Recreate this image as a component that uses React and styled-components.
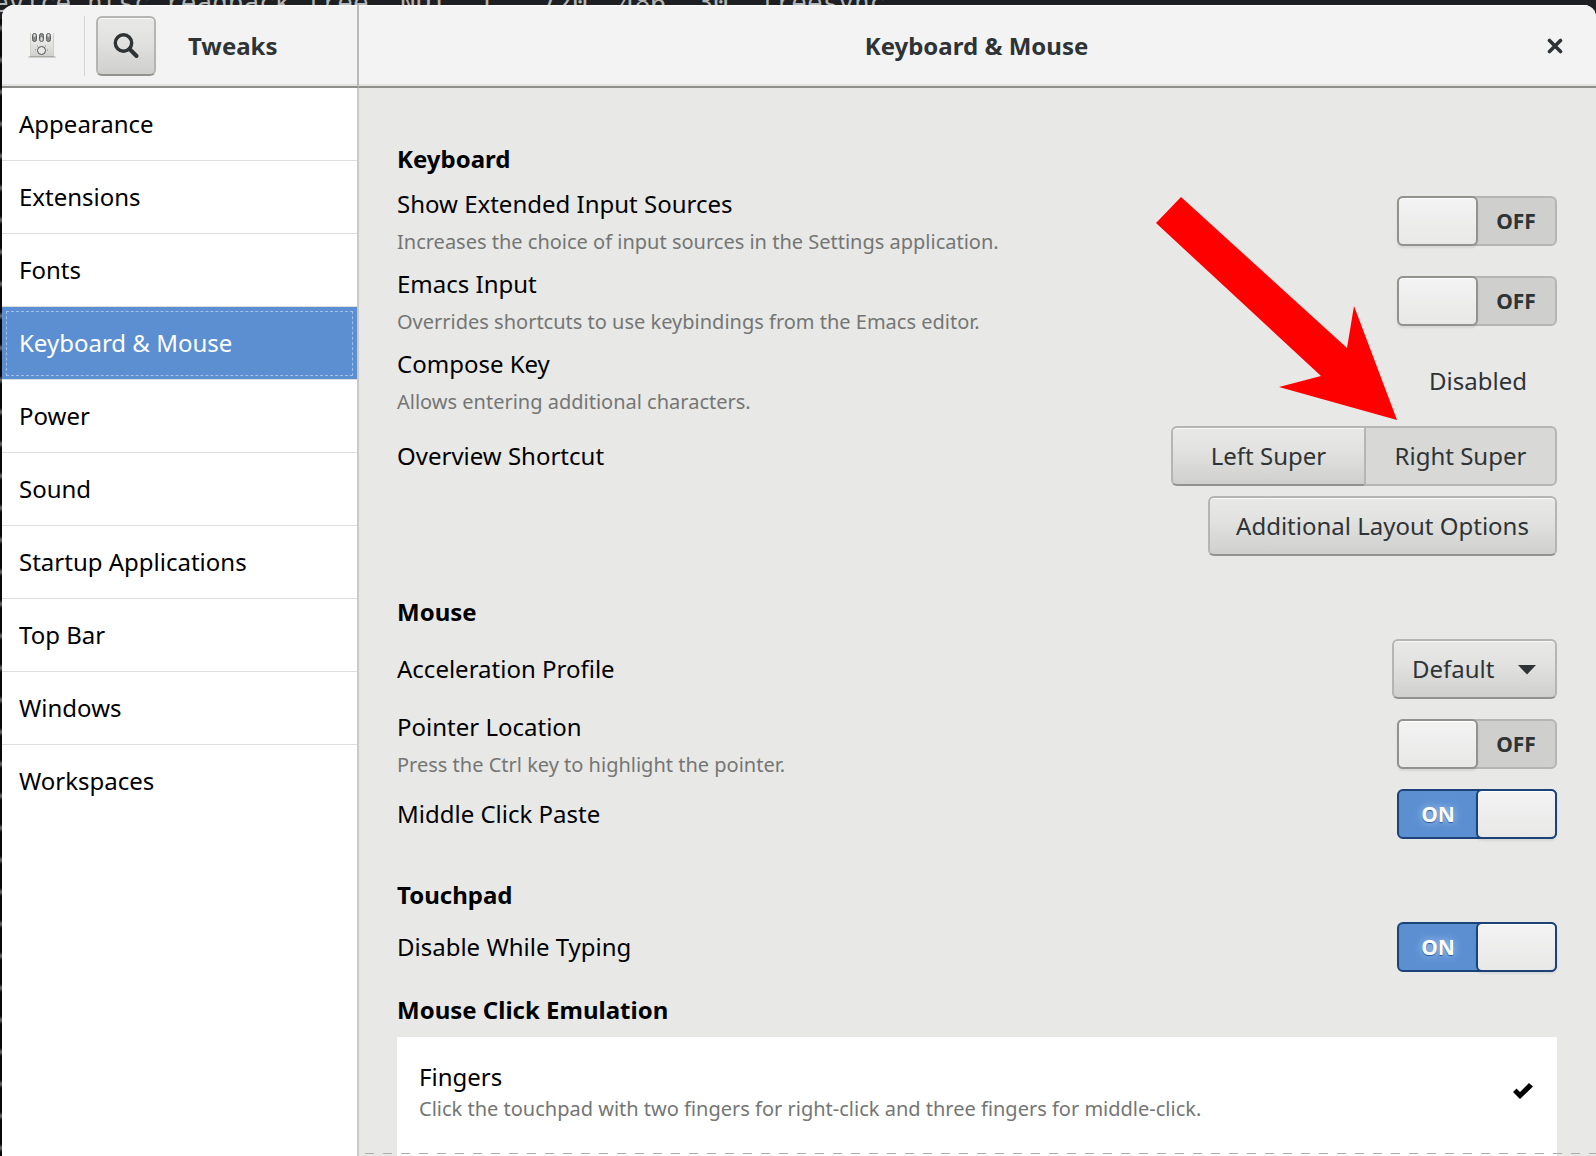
import { useState } from "react";
import styled, { createGlobalStyle, css } from "styled-components";

const GlobalStyle = createGlobalStyle`
  * {
    box-sizing: border-box;
  }
  body {
    margin: 0;
    background: #1b1c1f;
    color: #000;
    font-family: "Noto Sans", "Open Sans", sans-serif;
    font-size: 24px;
    line-height: 36px;
  }
  button, select {
    font: inherit;
  }
  h1, h2, h3, p, ul {
    margin: 0;
    padding: 0;
  }
`;

const Desktop = styled.div`
  position: relative;
  height: 100vh;
  padding: 5px 0 0 2px;
  overflow: hidden;
  background: repeating-linear-gradient(#08090a 0 24px, #6a6b6c 28px, #08090a 32px);
`;

/* last line of the terminal that sits behind the window */
const Terminal = styled.div`
  position: absolute;
  top: -13px;
  left: -7px;
  right: 0;
  height: 32px;
  overflow: hidden;
  background: #1d1f22;
  color: #b4b5b5;
  font-family: "DejaVu Sans Mono", monospace;
  font-size: 26px;
  line-height: 32px;
  white-space: pre;
`;

const Window = styled.div`
  position: relative;
  display: grid;
  grid-template-columns: 357px 1fr;
  grid-template-rows: 83px 1fr;
  height: 100%;
  border-radius: 12px 12px 0 0;
  overflow: hidden;
  background: #e8e8e7;
`;

const HeaderBar = styled.header`
  display: flex;
  align-items: center;
  background: #f3f3f3;
  border-bottom: 2px solid #8f8f8d;
  box-shadow: inset 0 -2px #e2e2e1, inset 0 1px #fff;
  color: #2e3436;
`;

const SideHeader = styled(HeaderBar)`
  padding-left: 26px;
  border-right: 2px solid #b9b9b7;
`;

const MainHeader = styled(HeaderBar)`
  display: grid;
  grid-template-columns: 60px 1fr 60px;
  padding: 0 11px 0 9px;
`;

const Title = styled.h1`
  font-size: 24px;
  font-weight: 700;
  text-align: center;
  grid-column: 2;
`;

const Separator = styled.span`
  width: 1px;
  height: 60px;
  margin: 0 11px 0 28px;
  background: #d2d2d0;
`;

const raised = css`
  border: 2px solid #b5b5b2;
  border-bottom-color: #92928f;
  border-radius: 6px;
  background: linear-gradient(#e8e8e7, #e2e2e0 40%, #cfcfcd);
  box-shadow: inset 0 1px #f8f8f8;
  color: #2e3436;
`;

const SearchButton = styled.button`
  ${raised}
  display: flex;
  align-items: center;
  justify-content: center;
  width: 60px;
  height: 60px;
  margin-right: 32px;
  padding: 0;
`;

const CloseButton = styled.button`
  display: flex;
  align-items: center;
  justify-content: center;
  height: 60px;
  border: 0;
  background: none;
  color: #2e3436;
`;

const Sidebar = styled.nav`
  background: #fff;
  border-right: 2px solid #cacac8;

  ul {
    list-style: none;
  }
`;

const SideLink = styled.a`
  display: flex;
  align-items: center;
  height: 73px;
  padding: 0 17px;
  border-bottom: 1px solid ${(p) => (p.$last ? "transparent" : "#dededd")};
  color: #000;
  text-decoration: none;

  ${(p) =>
    p.$active &&
    css`
      background: #5b8fd2;
      color: #fff;
      outline: 1px dashed #a3c1e8;
      outline-offset: -5px;
    `}
`;

const Content = styled.main`
  position: relative;
  min-height: 0;
  padding: 54px 39px 0 38px;
  overflow: hidden;

  /* undershoot hint: there is more to scroll to */
  &::after {
    content: "";
    position: absolute;
    left: 0;
    right: 0;
    bottom: 2px;
    height: 1px;
    background: repeating-linear-gradient(90deg, transparent 0 6px, #adadab 6px 15px, transparent 15px 18px);
  }
`;

const Section = styled.section`
  display: flex;
  flex-direction: column;
  gap: 10px;
  margin-bottom: ${(p) => (p.$tight ? "21px" : "39px")};
`;

const Heading = styled.h2`
  font-size: 24px;
  font-weight: 700;
  line-height: 34px;
`;

const SettingRow = styled.div`
  display: flex;
  align-items: center;
  justify-content: ${(p) => (p.$end ? "flex-end" : "space-between")};
`;

const RowText = styled.div`
  display: flex;
  flex-direction: column;
  gap: ${(p) => (p.$dense ? "0" : "6px")};
`;

const Description = styled.p`
  color: #747674;
  font-size: 20px;
  line-height: 28px;
`;

const SwitchBox = styled.label`
  position: relative;
  display: grid;
  grid-template-columns: 1fr 1fr;
  grid-template-rows: 100%;
  align-items: center;
  width: 160px;
  height: 50px;
  border: 2px solid ${(p) => (p.$on ? "#1c4377" : "#b5b5b2")};
  border-radius: 6px;
  background: ${(p) => (p.$on ? "#5b8fd2" : "#cfcfcd")};
  color: ${(p) => (p.$on ? "#fff" : "#2e3436")};
  font-size: 21px;
  font-weight: 700;
  text-align: center;
  text-shadow: ${(p) => (p.$on ? "0 1px 1px #2b5c9c, 0 0 8px #b8d2f3" : "none")};

  input {
    position: absolute;
    inset: 0;
    margin: 0;
    opacity: 0;
  }

  span {
    grid-row: 1;
    grid-column: ${(p) => (p.$on ? 1 : 2)};
  }

  &::before {
    content: "";
    grid-row: 1;
    grid-column: ${(p) => (p.$on ? 2 : 1)};
    align-self: stretch;
    margin: ${(p) => (p.$on ? "-2px -2px -2px -1px" : "-2px -1px -2px -2px")};
    border: 2px solid ${(p) => (p.$on ? "#1c4377" : "#92928f")};
    border-radius: 6px;
    background: linear-gradient(#f3f3f3, #e8e8e7);
    box-shadow: inset 0 1px #fff, 0 2px 2px rgba(0, 0, 0, 0.08);
  }
`;

const FlatButton = styled.button`
  height: 60px;
  margin: -5px 0;
  padding: 0 30px;
  border: 0;
  background: none;
  color: #2e3436;
`;

const Button = styled.button`
  ${raised}
  min-width: ${(p) => p.$minWidth};
  height: 60px;
  padding: 0 12px;

  ${(p) =>
    p.$pressed &&
    css`
      background: #d8d8d6;
      border-color: #b5b5b2;
      box-shadow: none;
    `}
`;

const Linked = styled.div`
  display: flex;

  ${Button}:first-child {
    border-right-width: 0;
    border-radius: 6px 0 0 6px;
  }
  ${Button}:last-child {
    border-radius: 0 6px 6px 0;
  }
`;

const SelectWrap = styled.div`
  position: relative;

  svg {
    position: absolute;
    right: 21px;
    top: 26px;
    pointer-events: none;
  }
`;

const Select = styled.select`
  ${raised}
  appearance: none;
  width: 165px;
  height: 60px;
  padding: 0 50px 0 18px;
`;

const Card = styled.button`
  display: flex;
  align-items: center;
  justify-content: space-between;
  width: 100%;
  padding: 22px 24px 40px 22px;
  border: 0;
  background: #fff;
  text-align: left;
`;

const Arrow = styled.svg`
  position: absolute;
  top: 108px;
  right: 198px;
  pointer-events: none;
`;

const pages = [
  "Appearance",
  "Extensions",
  "Fonts",
  "Keyboard & Mouse",
  "Power",
  "Sound",
  "Startup Applications",
  "Top Bar",
  "Windows",
  "Workspaces",
];

const TweaksIcon = () => (
  <svg width="28" height="28" viewBox="0 0 28 28" aria-hidden="true">
    <defs>
      <linearGradient id="body" x1="0" y1="0" x2="0" y2="1">
        <stop offset="0" stopColor="#f4f4f1" />
        <stop offset="1" stopColor="#d0d0cb" />
      </linearGradient>
    </defs>
    <rect x="0" y="24" width="28" height="2" rx="1" fill="#d0d0ce" />
    <rect x="2" y="1" width="24" height="24" rx="1" fill="url(#body)" />
    <path d="M2.5 1v23M25.500 1v23" stroke="#cfcfcb" />
    <path d="M2 24.5h24" stroke="#a9a9a5" />
    {[4, 11, 18].map((x) => (
      <rect key={x} x={x + 0.5} y="1.500" width="4" height="8" rx="2" fill="#8d8f8e" stroke="#5c5f60" />
    ))}
    <rect x="5.5" y="2" width="2" height="3" rx="1" fill="#ddd" />
    <rect x="12.5" y="5" width="2" height="4" rx="1" fill="#ddd" />
    <rect x="19.5" y="2" width="2" height="3" rx="1" fill="#ddd" />
    <circle cx="13.5" cy="18.5" r="4" fill="#e9e9e6" stroke="#4c4f50" />
    <path d="M7 18h1M19 18h1M9 14h1M17 14h1" stroke="#8a8a86" />
  </svg>
);

const Switch = ({ id, label, initial = false }) => {
  const [on, setOn] = useState(initial);

  return (
    <SwitchBox $on={on}>
      <input
        id={id}
        type="checkbox"
        role="switch"
        aria-label={label}
        checked={on}
        onChange={(e) => setOn(e.target.checked)}
      />
      <span>{on ? "ON" : "OFF"}</span>
    </SwitchBox>
  );
};

const Setting = ({ id, label, description, children }) => (
  <SettingRow>
    <RowText>
      <label htmlFor={id}>{label}</label>
      {description && <Description>{description}</Description>}
    </RowText>
    {children}
  </SettingRow>
);

const App = () => {
  const [page, setPage] = useState("Keyboard & Mouse");
  const [overview, setOverview] = useState("Right Super");

  return (
    <Desktop>
      <GlobalStyle />
      <Terminal aria-hidden="true">
        {"evice ntsc readback free  NDI  1   720  486  30  freesync"}
      </Terminal>
      <Window>
        <SideHeader>
          <TweaksIcon />
          <Separator />
          <SearchButton aria-label="Search">
            <svg width="28" height="28" viewBox="0 0 28 28" fill="none" stroke="currentColor" aria-hidden="true">
              <circle cx="11.5" cy="11" r="8.2" strokeWidth="3.4" />
              <path d="M17.5 17l7 7" strokeWidth="4" strokeLinecap="round" />
            </svg>
          </SearchButton>
          <Title as="span">Tweaks</Title>
        </SideHeader>
        <MainHeader>
          <Title>{page}</Title>
          <CloseButton aria-label="Close">
            <svg width="16" height="16" viewBox="0 0 16 16" stroke="currentColor" aria-hidden="true">
              <path d="M2.5 2.5l11 11M13.5 2.5l-11 11" strokeWidth="3.6" strokeLinecap="round" />
            </svg>
          </CloseButton>
        </MainHeader>

        <Sidebar>
          <ul>
            {pages.map((name, index) => (
              <li key={name}>
                <SideLink
                  href="#"
                  $active={name === page}
                  $last={index === pages.length - 1}
                  onClick={() => setPage(name)}
                >
                  {name}
                </SideLink>
              </li>
            ))}
          </ul>
        </Sidebar>

        <Content>
          <Section>
            <Heading>Keyboard</Heading>
            <Setting
              id="extended"
              label="Show Extended Input Sources"
              description="Increases the choice of input sources in the Settings application."
            >
              <Switch id="extended" label="Show Extended Input Sources" />
            </Setting>
            <Setting
              id="emacs"
              label="Emacs Input"
              description="Overrides shortcuts to use keybindings from the Emacs editor."
            >
              <Switch id="emacs" label="Emacs Input" />
            </Setting>
            <Setting id="compose" label="Compose Key" description="Allows entering additional characters.">
              <FlatButton id="compose">Disabled</FlatButton>
            </Setting>
            <SettingRow>
              <span id="overview">Overview Shortcut</span>
              <Linked role="group" aria-labelledby="overview">
                {["Left Super", "Right Super"].map((name) => (
                  <Button
                    key={name}
                    $minWidth="193px"
                    $pressed={name === overview}
                    aria-pressed={name === overview}
                    onClick={() => setOverview(name)}
                  >
                    {name}
                  </Button>
                ))}
              </Linked>
            </SettingRow>
            <SettingRow $end>
              <Button $minWidth="349px">Additional Layout Options</Button>
            </SettingRow>
          </Section>

          <Section>
            <Heading>Mouse</Heading>
            <Setting id="accel" label="Acceleration Profile">
              <SelectWrap>
                <Select id="accel" defaultValue="Default">
                  <option>Default</option>
                </Select>
                <svg width="18" height="10" viewBox="0 0 18 10" aria-hidden="true">
                  <path d="M0 0h18l-9 9.5z" fill="#2e3436" />
                </svg>
              </SelectWrap>
            </Setting>
            <Setting
              id="pointer"
              label="Pointer Location"
              description="Press the Ctrl key to highlight the pointer."
            >
              <Switch id="pointer" label="Pointer Location" />
            </Setting>
            <Setting id="paste" label="Middle Click Paste">
              <Switch id="paste" label="Middle Click Paste" initial />
            </Setting>
          </Section>

          <Section $tight>
            <Heading>Touchpad</Heading>
            <Setting id="typing" label="Disable While Typing">
              <Switch id="typing" label="Disable While Typing" initial />
            </Setting>
          </Section>

          <Section>
            <Heading as="h3">Mouse Click Emulation</Heading>
            <Card>
              <RowText $dense>
                <span>Fingers</span>
                <Description as="span">
                  Click the touchpad with two fingers for right-click and three fingers for middle-click.
                </Description>
              </RowText>
              <svg width="20" height="16" viewBox="0 0 20 16" aria-hidden="true">
                <path d="M0 9l3.5-3.5L7 9l9-9 4 3.5L7 16z" fill="#000" />
              </svg>
            </Card>
          </Section>

          <Arrow width="242" height="225" viewBox="0 0 242 225" aria-hidden="true">
            <path d="M25 1L0 27l165 153-42 11 118 33-43-114-7 42z" fill="#f00" />
          </Arrow>
        </Content>
      </Window>
    </Desktop>
  );
};

export default App;
